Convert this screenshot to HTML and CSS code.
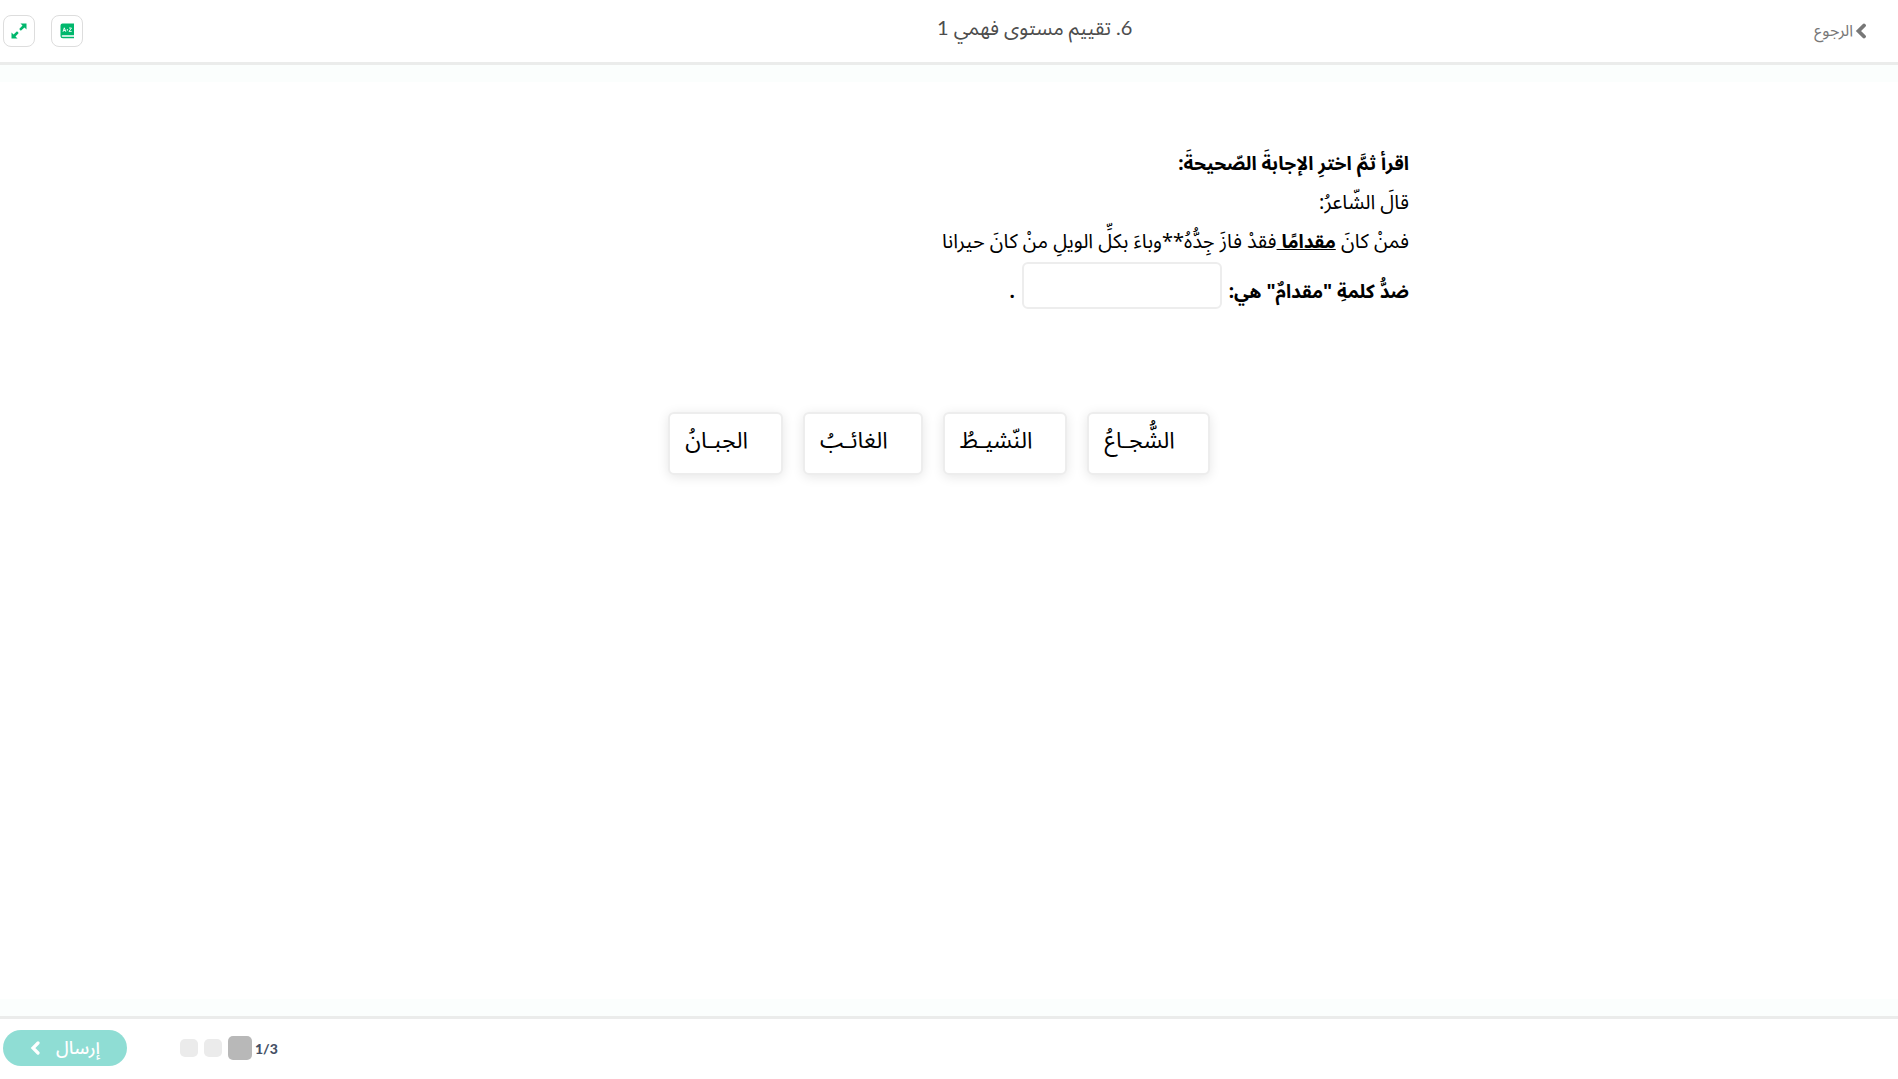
FILE: index.html
```html
<!DOCTYPE html>
<html lang="ar" dir="rtl">
<head>
  <meta charset="UTF-8" />
  <meta name="viewport" content="width=device-width, initial-scale=1" />
  <title>تقييم مستوى فهمي 1</title>
  <link rel="stylesheet" href="styles.css">
</head>
<body>

<header class="top-bar">
  <a class="back-link" href="#">
    <svg width="11" height="16" viewBox="0 0 11 16" aria-hidden="true"><path d="M9 2.500 3.500 8 9 13.500" fill="none" stroke="currentColor" stroke-width="3.800" stroke-linecap="round" /></svg>
    <span>الرجوع</span>
  </a>
  <h1 class="title">6. تقييم مستوى فهمي 1</h1>
  <div class="tools">
    <button class="tool" type="button" aria-label="القاموس">
      <svg width="15" height="16" viewBox="0 0 15 16" aria-hidden="true">
        <path d="M2.500.5H14v11.800H2.600q-1 0-1 .7t1 .7H14v1.600H3Q.5 15.300.5 12.800V2.500q0-2 2-2z" fill="#00b76c" />
        <path d="M3 8.800 4.300 4.800 5.800 8.800M3.500 7.500h2M9 5h2.500L9 8.400h2.700" fill="none" stroke="#fff" stroke-width=".9" />
        <path d="M6.800 6.200H8v1.200H6.800z" fill="#fff" />
      </svg>
    </button>
    <button class="tool" type="button" aria-label="ملء الشاشة">
      <svg width="16" height="16" viewBox="0 0 16 16" aria-hidden="true">
        <path d="M9.500.5h6v6l-2-2-3.700 3.200-1.600-1.600 3.300-3.600zM6.500 15.500h-6v-6l2 2 3.500-3.200 1.700 1.600-3.200 3.600z" fill="#00b76c" />
      </svg>
    </button>
  </div>
</header>

<main class="content">
  <div class="sheet">
    <section class="question">
      <p><strong>اقرأ ثمَّ اخترِ الإجابةَ الصّحيحةَ:</strong></p>
      <p>قالَ الشّاعرُ:</p>
      <p>فمنْ كانَ <strong><u>مقدامًا </u></strong>فقدْ فازَ جِدُّهُ**وباءَ بكلِّ الويلِ منْ كانَ حيرانا</p>
      <p class="answer-row">
        <strong><label for="answer">ضدُّ كلمةِ "مقدامٌ" هي:</label></strong>
        <input class="blank" id="answer" type="text" readonly />
        <strong>.</strong>
      </p>
    </section>

    <div class="options">
      <button class="option" type="button">الشُّجـاعُ</button>
      <button class="option" type="button">النّشيـطُ</button>
      <button class="option" type="button">الغائـبُ</button>
      <button class="option" type="button">الجبـانُ</button>
    </div>
  </div>
</main>

<footer class="bottom-bar">
  <div class="progress">
    <span class="count" dir="ltr">1/3</span>
    <span class="step current"></span>
    <span class="step"></span>
    <span class="step"></span>
  </div>
  <button class="submit" type="button">
    <span>إرسال</span>
    <svg width="10" height="14" viewBox="0 0 10 14" aria-hidden="true"><path d="M8 2 3 7l5 5" fill="none" stroke="currentColor" stroke-width="3.200" stroke-linecap="round" /></svg>
  </button>
</footer>

</body>
</html>
```
FILE: styles.css
```css
:root {
  --line: #ebeceb;
  --mint: #8fddd4;
}

* {
  box-sizing: border-box;
}

body {
  margin: 0;
  min-height: 100vh;
  display: flex;
  flex-direction: column;
  font-family: "Noto Sans", "Noto Sans Arabic", "DejaVu Sans", sans-serif;
  color: #000;
  background: #fff;
}

button {
  font-family: inherit;
  cursor: pointer;
}

.top-bar {
  display: flex;
  align-items: center;
  height: 65px;
  padding: 0 32px 0 3px;
  border-bottom: 3px solid var(--line);
}

.back-link {
  display: flex;
  align-items: center;
  gap: 2px;
  color: #777;
  font-size: 16px;
  text-decoration: none;
}

.title {
  flex: 1;
  margin: 0;
  padding-bottom: 4px;
  text-align: center;
  font-family: Lato, "Noto Sans", "Noto Sans Arabic", sans-serif;
  font-size: 20px;
  font-weight: 400;
  color: #4d4d4d;
}

.tools {
  display: flex;
  justify-content: flex-end;
  gap: 16px;
  width: 252px;
}
.tool {
  display: flex;
  align-items: center;
  justify-content: center;
  width: 32px;
  height: 32px;
  padding: 0;
  border: 1px solid #ddd;
  border-radius: 8px;
  background: #fff;
}

.content {
  flex: 1;
  display: flex;
  padding: 17px 0;
  background: #fbfefd;
}
.sheet {
  flex: 1;
  padding: 61px 16px;
  background: #fff;
}

.question {
  max-width: 920px;
  margin: 0 auto;
  font-size: 20px;
  line-height: 39px;
}
.question p {
  margin: 0;
}
.question strong {
  font-size: 19px;
  line-height: 36px;
}
.question .answer-row {
  display: flex;
  align-items: flex-end;
  gap: 7px;
  padding-top: 2px;
}
.blank {
  width: 200px;
  height: 47px;
  border: 2px solid #ededed;
  border-radius: 6px;
  background: #fff;
}

.options {
  display: flex;
  flex-wrap: wrap;
  justify-content: center;
  margin-top: 103px;
}
.option {
  height: 63px;
  margin-right: 20px;
  padding: 0 33px 6px 15px;
  border: 2px solid #ededed;
  border-radius: 6px;
  background: #fff;
  box-shadow: 0 2px 12px rgba(0, 0, 0, 0.1);
  color: #000;
  font-size: 23px;
}

.bottom-bar {
  display: flex;
  align-items: center;
  justify-content: flex-end;
  gap: 53px;
  height: 63px;
  padding: 0 0 2px 3px;
  border-top: 3px solid var(--line);
}

.progress {
  display: flex;
  align-items: center;
  gap: 6px;
}
.count {
  margin-left: -3px;
  color: #455065;
  font-family: Lato, sans-serif;
  font-size: 14px;
  font-weight: 900;
}
.step {
  width: 18px;
  height: 18px;
  border-radius: 5px;
  background: #ebebeb;
}
.step.current {
  width: 24px;
  height: 24px;
  background: #b8b8b8;
}

.submit {
  display: flex;
  align-items: center;
  justify-content: center;
  gap: 16px;
  width: 124px;
  height: 36px;
  padding: 0;
  border: none;
  border-radius: 18px;
  background: var(--mint);
  color: #fff;
  font-size: 18px;
  font-weight: 500;
}
```
